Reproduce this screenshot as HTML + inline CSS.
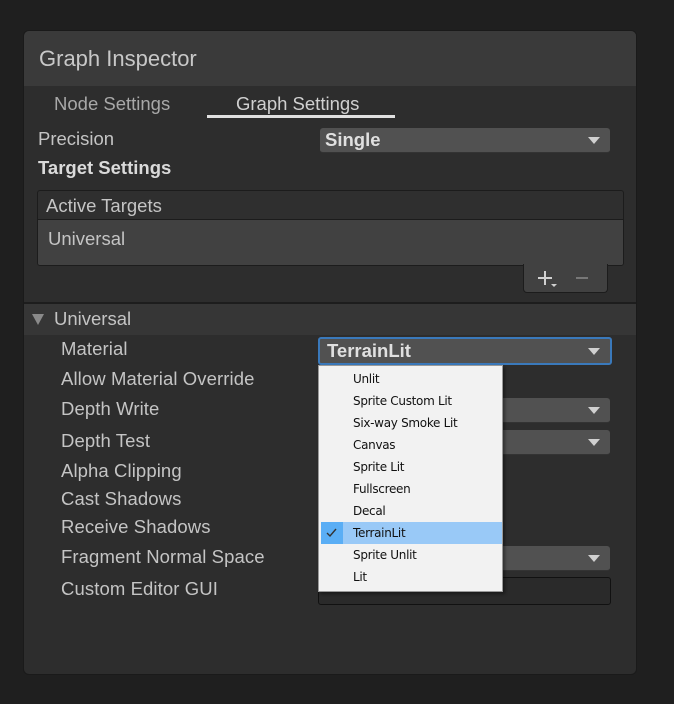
<!DOCTYPE html>
<html><head><style>
*{box-sizing:border-box;margin:0;padding:0}
body{width:674px;height:704px;background:#1f1f1f;font-family:"Liberation Sans",sans-serif;color:#c4c4c4;position:relative;overflow:hidden}
.a{position:absolute}
.panel{left:23px;top:30px;width:614px;height:645px;background:#2d2d2d;border-radius:6px;border:1px solid #1a1a1a;overflow:hidden}
.lbl{font-size:18.5px;position:absolute;left:61px;white-space:nowrap;letter-spacing:0.1px}
.dd{position:absolute;background:#515151;border-radius:3px;border-bottom:1px solid #333}
.arr{position:absolute;right:10px;top:50%;margin-top:-3px;width:0;height:0;border-left:6px solid transparent;border-right:6px solid transparent;border-top:7px solid #d0d0d0}
.pop{left:318px;top:365px;width:185px;height:227px;background:#f2f2f2;border:1px solid #999;box-shadow:2px 2px 3px rgba(0,0,0,.4)}
.it{position:absolute;left:34px;font-size:12px;color:#111;font-family:"DejaVu Sans","Liberation Sans",sans-serif;letter-spacing:-0.3px}
</style></head><body>
<div class="a panel">
 <div class="a" style="left:0;top:0;width:614px;height:55px;background:#3a3a3a"></div>
 <div class="a" style="left:15px;top:15px;font-size:22px;color:#c8c8c8">Graph Inspector</div>
 <div class="a" style="left:30px;top:62px;font-size:18.5px;color:#a8a8a8">Node Settings</div>
 <div class="a" style="left:212px;top:62px;font-size:18.5px;color:#d0d0d0">Graph Settings</div>
 <div class="a" style="left:183px;top:84px;width:188px;height:3px;background:#e0e0e0"></div>
</div>
<div class="a" style="left:38px;top:128px;font-size:18.5px">Precision</div>
<div class="dd" style="left:320px;top:128px;width:290px;height:25px"><span class="a" style="left:5px;top:1px;font-size:18.5px;font-weight:bold;color:#e0e0e0">Single</span><div class="arr"></div></div>
<div class="a" style="left:38px;top:157px;font-size:18.5px;font-weight:bold;color:#dadada">Target Settings</div>
<div class="a" style="left:37px;top:190px;width:587px;height:76px;background:#2f2f2f;border:1px solid #1c1c1c;border-radius:3px;overflow:hidden">
 <div class="a" style="left:0;top:28px;width:587px;height:47px;background:#414141;border-top:1px solid #1c1c1c"></div>
 <div class="a" style="left:8px;top:4px;font-size:18.5px">Active Targets</div>
 <div class="a" style="left:10px;top:37px;font-size:18.5px">Universal</div>
</div>
<div class="a" style="left:523px;top:264px;width:85px;height:29px;background:#414141;border:1px solid #1c1c1c;border-top:none;border-radius:0 0 4px 4px"></div>
<div class="a" style="left:538px;top:277px;width:14px;height:2px;background:#d0d0d0"></div>
<div class="a" style="left:544px;top:271px;width:2px;height:14px;background:#d0d0d0"></div>
<div class="a" style="left:551px;top:284px;border-left:3px solid transparent;border-right:3px solid transparent;border-top:3px solid #d0d0d0"></div>
<div class="a" style="left:576px;top:277px;width:12px;height:2px;background:#777"></div>
<div class="a" style="left:24px;top:302px;width:612px;height:2px;background:#1d1d1d"></div>
<div class="a" style="left:24px;top:304px;width:612px;height:31px;background:#363636"></div>
<div class="a" style="left:32px;top:314px;border-left:6px solid transparent;border-right:6px solid transparent;border-top:11px solid #8a8a8a"></div>
<div class="a" style="left:54px;top:308px;font-size:18.5px">Universal</div>
<div class="lbl" style="top:338px">Material</div>
<div class="lbl" style="top:368px">Allow Material Override</div>
<div class="lbl" style="top:398px">Depth Write</div>
<div class="lbl" style="top:430px">Depth Test</div>
<div class="lbl" style="top:460px">Alpha Clipping</div>
<div class="lbl" style="top:488px">Cast Shadows</div>
<div class="lbl" style="top:516px">Receive Shadows</div>
<div class="lbl" style="top:546px">Fragment Normal Space</div>
<div class="lbl" style="top:578px">Custom Editor GUI</div>
<div class="dd" style="left:318px;top:337px;width:294px;height:28px;border:2px solid #3a79bb"><span class="a" style="left:7px;top:1px;font-size:18.5px;font-weight:bold;color:#e0e0e0">TerrainLit</span><div class="arr"></div></div>
<div class="dd" style="left:318px;top:398px;width:292px;height:25px"><div class="arr"></div></div>
<div class="dd" style="left:318px;top:430px;width:292px;height:25px"><div class="arr"></div></div>
<div class="dd" style="left:318px;top:546px;width:292px;height:25px"><div class="arr"></div></div>
<div class="a" style="left:318px;top:577px;width:293px;height:28px;background:#2a2a2a;border:1px solid #111;border-radius:3px"></div>
<div class="a pop">
 <div class="a" style="left:2px;top:156px;width:181px;height:22px;background:#99c9f7"></div>
 <div class="a" style="left:2px;top:156px;width:22px;height:22px;background:#5aaef5"></div>
 <svg class="a" style="left:6px;top:161px" width="14" height="12"><path d="M2 6 L5 9 L11 2" stroke="#333" stroke-width="1.4" fill="none"/></svg>
 <div class="it" style="top:6px">Unlit</div>
 <div class="it" style="top:28px">Sprite Custom Lit</div>
 <div class="it" style="top:50px">Six-way Smoke Lit</div>
 <div class="it" style="top:72px">Canvas</div>
 <div class="it" style="top:94px">Sprite Lit</div>
 <div class="it" style="top:116px">Fullscreen</div>
 <div class="it" style="top:138px">Decal</div>
 <div class="it" style="top:160px">TerrainLit</div>
 <div class="it" style="top:182px">Sprite Unlit</div>
 <div class="it" style="top:204px">Lit</div>
</div>
</body></html>
